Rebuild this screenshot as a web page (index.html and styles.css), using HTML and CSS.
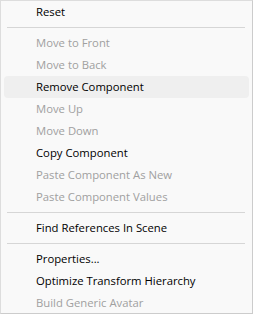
FILE: index.html
```html
<!DOCTYPE html>
<html lang="en">
<head>
    <meta charset="UTF-8">
    <title>Component Menu</title>
    <link rel="stylesheet" href="styles.css">
</head>
<body>
    <div class="context-menu">
        <div class="menu-item">Reset</div>
        <div class="menu-separator"></div>
        <div class="menu-item disabled">Move to Front</div>
        <div class="menu-item disabled">Move to Back</div>
        <div class="menu-item hover">Remove Component</div>
        <div class="menu-item disabled">Move Up</div>
        <div class="menu-item disabled">Move Down</div>
        <div class="menu-item">Copy Component</div>
        <div class="menu-item disabled">Paste Component As New</div>
        <div class="menu-item disabled">Paste Component Values</div>
        <div class="menu-separator"></div>
        <div class="menu-item">Find References In Scene</div>
        <div class="menu-separator"></div>
        <div class="menu-item">Properties...</div>
        <div class="menu-item">Optimize Transform Hierarchy</div>
        <div class="menu-item disabled">Build Generic Avatar</div>
    </div>
</body>
</html>
```

FILE: styles.css
```css
:root {
    --menu-bg: #f9f9f9;
    --border: #cccccc;
    --text: #000000;
    --disabled: #a0a0a0;
    --hover: #efefef;
    --separator: #d6d6d6;
}

* {
    margin: 0;
    padding: 0;
    box-sizing: border-box;
}

body {
    background: var(--menu-bg);
    font-family: 'Open Sans', sans-serif;
}

.context-menu {
    width: 253px;
    height: 314px;
    background: var(--menu-bg);
    border: 1px solid var(--border);
    border-top-color: #dddddd;
    border-left-color: #dddddd;
    padding: 0 3px;
}

.menu-item {
    height: 22px;
    line-height: 22px;
    padding-left: 32px;
    font-size: 11.3px;
    color: var(--text);
    border-radius: 4px;
    white-space: nowrap;
}

.menu-item.disabled {
    color: var(--disabled);
}

.menu-item.hover {
    background: var(--hover);
}

.menu-separator {
    height: 1px;
    margin: 4px 4px 4px 3px;
    background: var(--separator);
}
```
